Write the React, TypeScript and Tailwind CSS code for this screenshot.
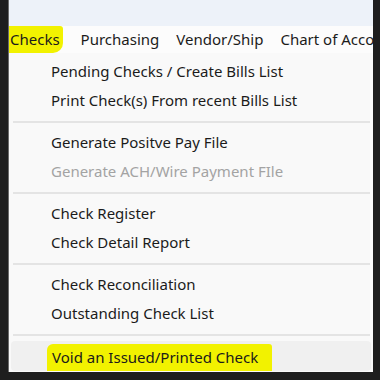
const menus = ["Checks", "Purchasing", "Vendor/Ship", "Chart of Accounts"];

type Entry = { label: string; disabled?: boolean } | "sep";

const items: Entry[] = [
  { label: "Pending Checks / Create Bills List" },
  { label: "Print Check(s) From recent Bills List" },
  "sep",
  { label: "Generate Positve Pay File" },
  { label: "Generate ACH/Wire Payment FIle", disabled: true },
  "sep",
  { label: "Check Register" },
  { label: "Check Detail Report" },
  "sep",
  { label: "Check Reconciliation" },
  { label: "Outstanding Check List" },
  "sep",
];

export default function App() {
  return (
    <div
      className="flex h-[380px] w-[380px] overflow-hidden bg-[#1e1e1e] pb-[8px] pl-[8px] pr-[7px] text-[15px] text-[#1b1b1b]"
      style={{ fontFamily: '"Noto Sans", "Open Sans", sans-serif' }}
    >
      <div className="flex min-w-0 flex-1 flex-col overflow-hidden border-l border-[#6b6b6b] bg-[#f9f9f9]">
        {/* window strip above the menu bar */}
        <div className="h-[26px] shrink-0 bg-[#edf2f9]" />

        {/* menu bar (last item is clipped by the window edge) */}
        <div className="flex h-[27px] shrink-0 items-center whitespace-nowrap bg-[#fcfcfc]">
          <span className="-ml-[1px] flex h-[27px] items-center rounded-br-[10px] rounded-tr-[3px] bg-[#f2f200] pl-[2px] pr-[3px]">
            {menus[0]}
          </span>
          <span className="ml-[18px]">{menus[1]}</span>
          <span className="ml-[17px]">{menus[2]}</span>
          <span className="ml-[17px]">{menus[3]}</span>
        </div>

        {/* dropdown */}
        <div className="flex flex-1 flex-col pt-[4px]">
          {items.map((it, i) =>
            it === "sep" ? (
              <div key={i} className="flex h-[13px] items-center pl-[4px] pr-[3px]">
                <div className="h-[2px] w-full bg-[#e4e4e4]" />
              </div>
            ) : (
              <div
                key={i}
                className={
                  "flex h-[29px] items-center whitespace-nowrap pl-[42px] " +
                  (it.disabled ? "text-[#a3a3a3]" : "")
                }
              >
                {it.label}
              </div>
            )
          )}
          <div className="mx-[2px] flex h-[30px] items-stretch rounded-[4px] bg-[#f0f0f0]">
            <span className="ml-[36px] mt-[3px] flex items-center rounded-tl-[6px] rounded-tr-[3px] bg-[#f2f200] pl-[5px] pr-[14px]">
              Void an Issued/Printed Check
            </span>
          </div>
        </div>
      </div>
    </div>
  );
}
